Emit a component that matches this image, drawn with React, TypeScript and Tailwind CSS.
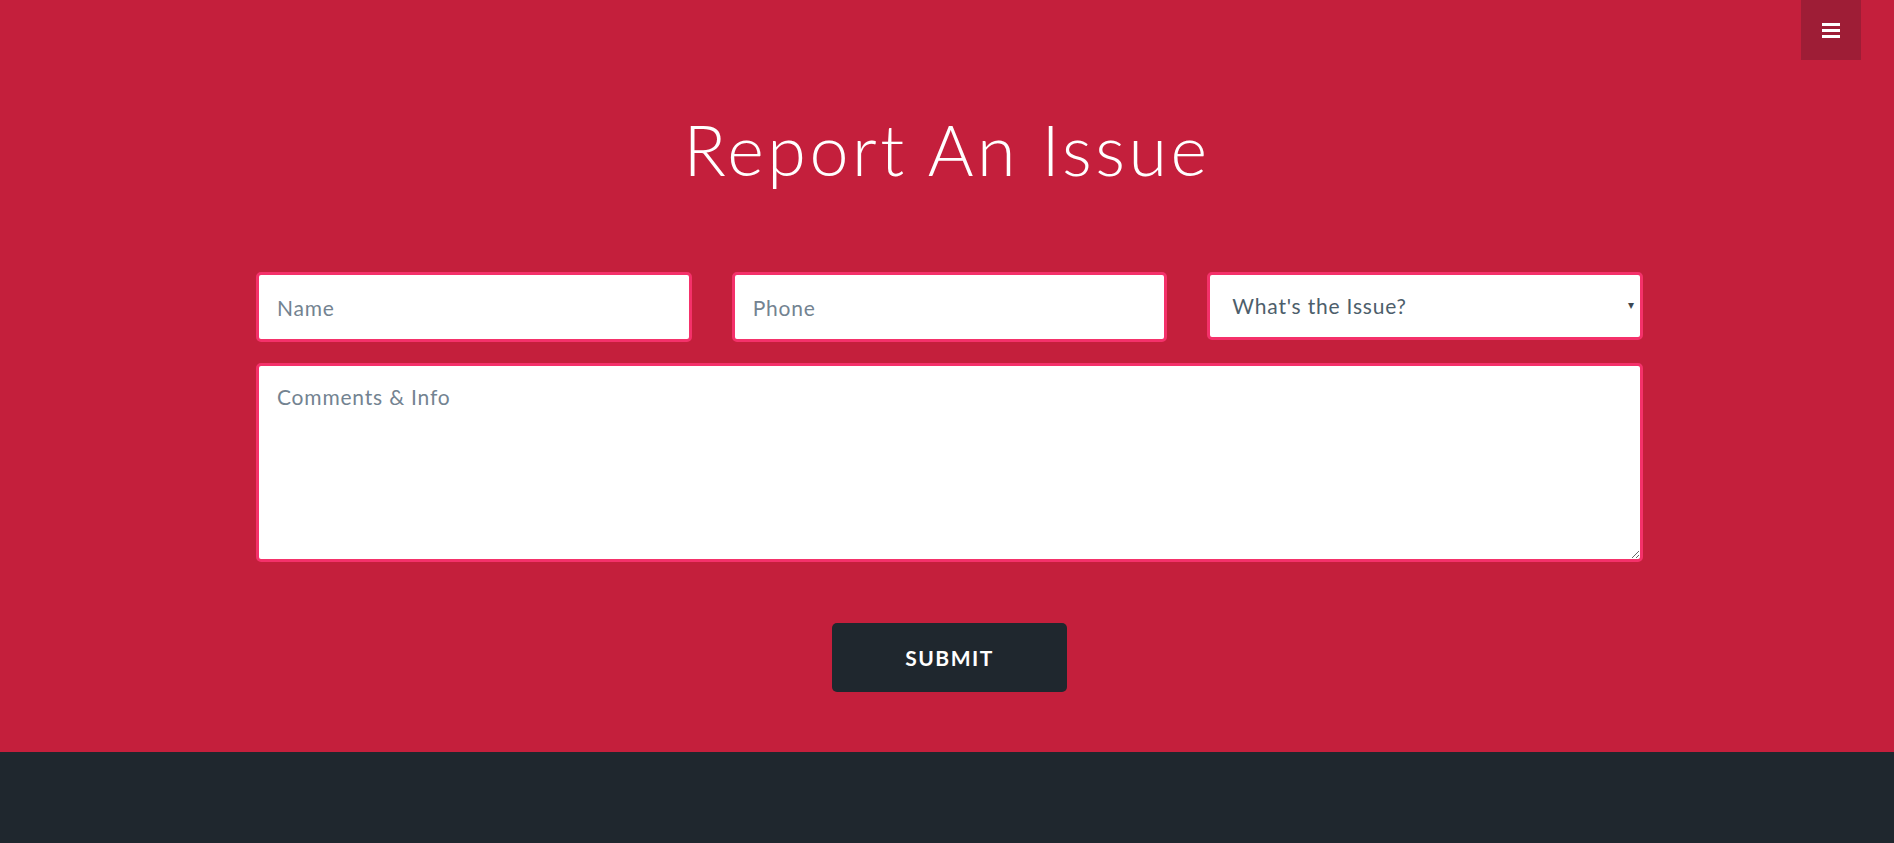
import React from 'react';

const fieldClass =
  'w-full h-[70px] rounded-[5px] border-[3px] border-[#f4316a] bg-white px-[18px] text-[21px] tracking-[0.8px] text-[#4d5e6b] outline-none placeholder:text-[#738391]';

const App: React.FC = () => {
  return (
    <div className="min-h-[843px] bg-[#1f272e] font-['Lato','Liberation_Sans',sans-serif]">
      <section className="relative bg-[#c41f3c] pt-[99px] pb-[60px]">
        <button className="absolute right-[33px] top-0 flex h-[60px] w-[60px] items-center justify-center bg-[#9e1d36]">
          <span className="flex w-[18px] flex-col gap-[3px]">
            <span className="h-[3px] bg-white" />
            <span className="h-[3px] bg-white" />
            <span className="h-[3px] bg-white" />
          </span>
        </button>

        <h1 className="text-center text-[70px] font-light leading-[100px] tracking-[3.5px] text-white">
          Report An Issue
        </h1>

        <form className="ml-[256px] mt-[73px] w-[1387px]" onSubmit={(e) => e.preventDefault()}>
          <div className="grid grid-cols-3 gap-x-[40px]">
            <input type="text" placeholder="Name" className={fieldClass} />
            <input type="text" placeholder="Phone" className={fieldClass} />
            <div className="relative">
              <select
                defaultValue=""
                className="h-[68px] w-full appearance-none rounded-[5px] border-[3px] border-[#f4316a] bg-white pl-[22px] pr-[30px] text-[21px] tracking-[0.8px] text-[#4d5e6b] outline-none"
              >
                <option value="" disabled>
                  What's the Issue?
                </option>
                <option>Pothole</option>
                <option>Streetlight</option>
                <option>Other</option>
              </select>
              <span className="pointer-events-none absolute right-[9px] top-[24px] text-[12px] text-[#3d4852]">▾</span>
            </div>
          </div>

          <textarea
            placeholder="Comments & Info"
            className="mt-[21px] block h-[199px] w-full rounded-[5px] border-[3px] border-[#f4316a] bg-white px-[18px] py-[15px] text-[21px] tracking-[0.8px] text-[#4d5e6b] outline-none placeholder:text-[#738391]"
          />

          <div className="mt-[61px] flex justify-center">
            <button
              type="submit"
              className="h-[69px] w-[235px] rounded-[5px] bg-[#1f272e] text-[21px] font-bold tracking-[1.5px] text-white"
            >
              SUBMIT
            </button>
          </div>
        </form>
      </section>
      <footer className="h-[91px] bg-[#1f272e]" />
    </div>
  );
};

export default App;
